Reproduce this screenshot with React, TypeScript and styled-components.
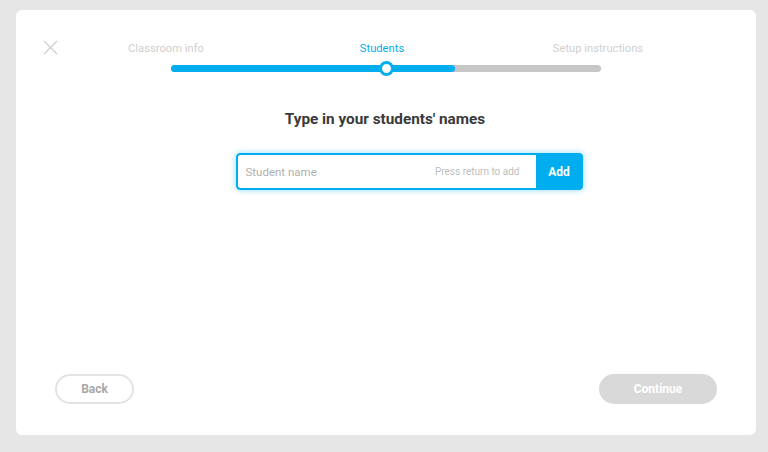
import React, { useState } from 'react'
import styled, { createGlobalStyle } from 'styled-components'

const Colors = {
  Blue: '#00aeef',
  BarGray: '#c6c6c6',
  LabelGray: '#cfcfcf',
  Text: '#3a3a3a',
  Page: '#e6e6e6',
}

const GlobalStyle = createGlobalStyle`
  html, body {
    margin: 0;
    padding: 0;
    background: ${Colors.Page};
    font-family: Roboto, "Liberation Sans", sans-serif;
  }
`

const steps = ['Classroom info', 'Students', 'Setup instructions']

export default function App() {
  const [name, setName] = useState('')
  const current = 1

  return (
    <>
      <GlobalStyle />
      <Page>
        <Card>
          <CloseButton aria-label="Close">
            <svg width="15" height="15" viewBox="0 0 15 15" fill="none" stroke="#d0d0d0" strokeWidth="1.4">
              <path d="M1 1L14 14M14 1L1 14" />
            </svg>
          </CloseButton>

          <Stepper>
            <StepLabels>
              {steps.map((step, idx) => (
                <StepLabel key={step} active={idx === current}>{step}</StepLabel>
              ))}
            </StepLabels>
            <Track>
              <Fill style={{ width: '66%' }} />
              <Knob />
            </Track>
          </Stepper>

          <Body>
            <Title>Type in your students' names</Title>
            <InputGroup>
              <InputWrap>
                <NameInput
                  placeholder="Student name"
                  value={name}
                  onChange={(e) => setName(e.target.value)}
                />
                <Hint>Press return to add</Hint>
              </InputWrap>
              <AddButton>Add</AddButton>
            </InputGroup>
          </Body>

          <Footer>
            <BackButton>Back</BackButton>
            <ContinueButton disabled>Continue</ContinueButton>
          </Footer>
        </Card>
      </Page>
    </>
  )
}

const Page = styled.div`
  padding: 10px 12px 17px 16px;
`

const Card = styled.div`
  position: relative;
  box-sizing: border-box;
  width: 740px;
  height: 425px;
  background: #fff;
  border-radius: 6px;
  display: flex;
  flex-direction: column;
  padding: 32px 39px 31px;
`

const CloseButton = styled.button`
  position: absolute;
  top: 30px;
  left: 27px;
  padding: 0;
  border: none;
  background: transparent;
  display: flex;
  cursor: pointer;
`

const Stepper = styled.div`
  display: flex;
  flex-direction: column;
  align-items: center;
`

const StepLabels = styled.div`
  display: grid;
  grid-template-columns: repeat(3, 216px);
  margin-left: -8px;
`

const StepLabel = styled.div<{ active?: boolean }>`
  text-align: center;
  font-size: 11.2px;
  line-height: 14px;
  color: ${(p) => (p.active ? Colors.Blue : Colors.LabelGray)};
`

const Track = styled.div`
  position: relative;
  margin-top: 9px;
  width: 430px;
  height: 7px;
  border-radius: 4px;
  background: ${Colors.BarGray};
`

const Fill = styled.div`
  height: 100%;
  border-radius: 4px;
  background: ${Colors.Blue};
`

const Knob = styled.div`
  position: absolute;
  left: 215px;
  top: 50%;
  box-sizing: border-box;
  width: 15px;
  height: 15px;
  margin: -7.5px 0 0 -7.5px;
  border-radius: 50%;
  border: 3px solid ${Colors.Blue};
  background: #fff;
`

const Body = styled.div`
  display: flex;
  flex-direction: column;
  align-items: center;
  margin-top: 37px;
`

const Title = styled.h1`
  margin: 0 0 0 -2px;
  font-size: 15.3px;
  line-height: 20px;
  font-weight: 700;
  color: ${Colors.Text};
`

const InputGroup = styled.div`
  display: flex;
  margin: 24px 0 0 46px;
  width: 347px;
  height: 37px;
  border-radius: 4px;
  box-shadow: 0 0 6px rgba(0, 174, 239, 0.45);
  overflow: hidden;
`

const InputWrap = styled.div`
  flex: 1;
  display: flex;
  align-items: center;
  box-sizing: border-box;
  border: 2px solid ${Colors.Blue};
  border-right: none;
  border-radius: 4px 0 0 4px;
  padding: 0 16px 0 8px;
  background: #fff;
`

const NameInput = styled.input`
  flex: 1;
  min-width: 0;
  border: none;
  outline: none;
  padding: 0;
  font-family: inherit;
  font-size: 11.5px;
  color: ${Colors.Text};
  &::placeholder {
    color: #b0b0b0;
  }
`

const Hint = styled.span`
  font-size: 10px;
  color: #bdbdbd;
  white-space: nowrap;
`

const AddButton = styled.button`
  width: 47px;
  border: none;
  background: ${Colors.Blue};
  color: #fff;
  font-family: inherit;
  font-weight: 700;
  font-size: 12px;
  cursor: pointer;
`

const Footer = styled.div`
  margin-top: auto;
  display: flex;
  justify-content: space-between;
`

const PillButton = styled.button`
  height: 30px;
  border-radius: 15px;
  font-family: inherit;
  font-weight: 700;
  font-size: 12px;
  cursor: pointer;
`

const BackButton = styled(PillButton)`
  width: 79px;
  background: #fff;
  border: 2px solid #e3e3e3;
  color: #a8a8a8;
`

const ContinueButton = styled(PillButton)`
  width: 118px;
  border: none;
  background: #d9d9d9;
  color: #fff;
`
